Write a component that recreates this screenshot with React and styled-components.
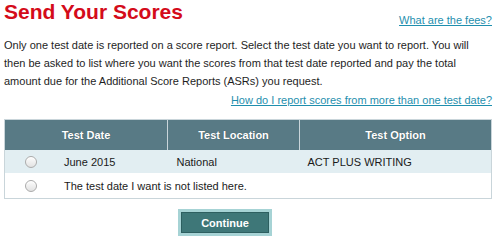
import React from "react";
import styled, { createGlobalStyle } from "styled-components";

const Global = createGlobalStyle`
  html, body { margin: 0; padding: 0; background: #fff; }
  body { font-family: "Liberation Sans", Arial, sans-serif; color: #222; }
`;

const Page = styled.div`
  width: 488px;
  padding: 0 8px 0 4px;
`;

const TitleRow = styled.div`
  display: flex;
  justify-content: space-between;
  align-items: flex-start;
  height: 30px;
`;

const Title = styled.h1`
  margin: 0;
  font-size: 21px;
  line-height: 24px;
  font-weight: bold;
  color: #d40b1a;
`;

const Link = styled.a`
  margin-top: ${(p) => p.$mt || "0"};
  font-size: 11px;
  line-height: 16px;
  color: #1f8fae;
  text-decoration: underline;
  cursor: pointer;
`;

const Intro = styled.p`
  margin: 6px 0 0;
  font-size: 11px;
  line-height: 18px;
  color: #1e1e1e;
`;

const HelpRow = styled.div`
  display: flex;
  justify-content: flex-end;
  margin-top: 2px;
  height: 16px;
`;

const Table = styled.table`
  margin-top: 11px;
  width: 488px;
  table-layout: fixed;
  border-collapse: collapse;
  border: 1px solid #c9d5da;
  font-size: 11px;
`;

const Th = styled.th`
  background: #587a85;
  color: #fff;
  font-weight: bold;
  height: 30px;
  padding: 0;
  text-align: center;
  border-left: 1px solid #c9d5da;
  text-shadow: 0 0 1px rgba(0, 0, 0, 0.35);
  width: ${(p) => p.$w || "auto"};
`;

const Tr = styled.tr`
  background: ${(p) => (p.$alt ? "#e2eef2" : "#fff")};
`;

const Td = styled.td`
  height: ${(p) => p.$h || "23px"};
  padding: 0 0 0 ${(p) => p.$pl || "0"};
  color: #1a1a1a;
  vertical-align: middle;
`;

const RadioCell = styled.div`
  display: flex;
  align-items: center;
  gap: 27px;
  padding-left: 20px;
`;

const Radio = styled.span`
  display: inline-block;
  box-sizing: border-box;
  width: 12px;
  height: 12px;
  border-radius: 50%;
  border: 1px solid #ababab;
  background: linear-gradient(#fdfdfd, #e2e2e2);
  box-shadow: inset 0 1px 1px rgba(255, 255, 255, 0.9);
`;

const ButtonRow = styled.div`
  display: flex;
  padding-left: 174px;
  margin-top: 10px;
`;

const Button = styled.button`
  box-sizing: border-box;
  width: 94px;
  height: 27px;
  padding: 0;
  border: 3px solid #a6d3d5;
  background: #3e7778;
  box-shadow: inset 0 0 0 1px #2d5f60;
  color: #fff;
  font-family: "Liberation Sans", Arial, sans-serif;
  font-weight: bold;
  font-size: 11px;
  cursor: pointer;
`;

export default function App() {
  return (
    <>
      <Global />
      <Page>
        <TitleRow>
          <Title>Send Your Scores</Title>
          <Link $mt="12px">What are the fees?</Link>
        </TitleRow>
        <Intro>
          Only one test date is reported on a score report. Select the test date you want to report. You will
          then be asked to list where you want the scores from that test date reported and pay the total
          amount due for the Additional Score Reports (ASRs) you request.
        </Intro>
        <HelpRow>
          <Link>How do I report scores from more than one test date?</Link>
        </HelpRow>
        <Table>
          <thead>
            <tr>
              <Th $w="162px">Test Date</Th>
              <Th $w="131px">Test Location</Th>
              <Th>Test Option</Th>
            </tr>
          </thead>
          <tbody>
            <Tr $alt>
              <Td>
                <RadioCell>
                  <Radio />
                  <span>June 2015</span>
                </RadioCell>
              </Td>
              <Td $pl="9px">National</Td>
              <Td $pl="8px">ACT PLUS WRITING</Td>
            </Tr>
            <Tr>
              <Td colSpan={3} $h="25px">
                <RadioCell>
                  <Radio />
                  <span>The test date I want is not listed here.</span>
                </RadioCell>
              </Td>
            </Tr>
          </tbody>
        </Table>
        <ButtonRow>
          <Button>Continue</Button>
        </ButtonRow>
      </Page>
    </>
  );
}
